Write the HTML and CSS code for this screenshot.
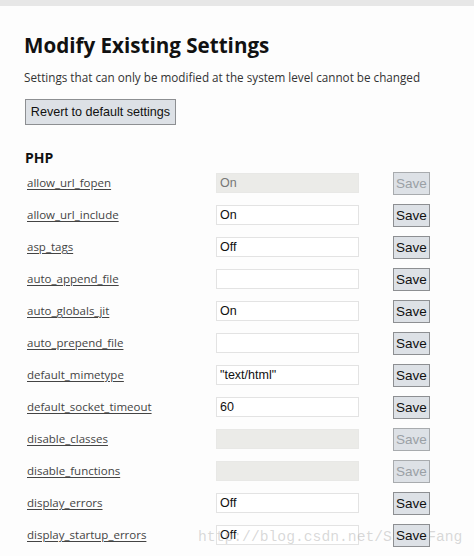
FILE: index.html
```html
<!DOCTYPE html>
<html>
<head>
<meta charset="utf-8">
<link rel="stylesheet" href="styles.css">
</head>
<body>
<div class="topbar"></div>
<main class="page">
  <h1 class="title">Modify Existing Settings</h1>
  <p class="note">Settings that can only be modified at the system level cannot be changed</p>
  <button class="btn revert">Revert to default settings</button>
  <h2 class="section">PHP</h2>
  <div class="rows">
    <div class="row"><a class="name" href="#">allow_url_fopen</a><input class="val" value="On" disabled><button class="btn save" disabled>Save</button></div>
    <div class="row"><a class="name" href="#">allow_url_include</a><input class="val" value="On"><button class="btn save">Save</button></div>
    <div class="row"><a class="name" href="#">asp_tags</a><input class="val" value="Off"><button class="btn save">Save</button></div>
    <div class="row"><a class="name" href="#">auto_append_file</a><input class="val" value=""><button class="btn save">Save</button></div>
    <div class="row"><a class="name" href="#">auto_globals_jit</a><input class="val" value="On"><button class="btn save">Save</button></div>
    <div class="row"><a class="name" href="#">auto_prepend_file</a><input class="val" value=""><button class="btn save">Save</button></div>
    <div class="row"><a class="name" href="#">default_mimetype</a><input class="val" value="&quot;text/html&quot;"><button class="btn save">Save</button></div>
    <div class="row"><a class="name" href="#">default_socket_timeout</a><input class="val" value="60"><button class="btn save">Save</button></div>
    <div class="row"><a class="name" href="#">disable_classes</a><input class="val" value="" disabled><button class="btn save" disabled>Save</button></div>
    <div class="row"><a class="name" href="#">disable_functions</a><input class="val" value="" disabled><button class="btn save" disabled>Save</button></div>
    <div class="row"><a class="name" href="#">display_errors</a><input class="val" value="Off"><button class="btn save">Save</button></div>
    <div class="row"><a class="name" href="#">display_startup_errors</a><input class="val" value="Off"><button class="btn save">Save</button></div>
  </div>
</main>
<div class="watermark">http://blog.csdn.net/SheniFang</div>
</body>
</html>
```
FILE: styles.css
```css
html, body {
  margin: 0;
  padding: 0;
  background: #fdfdfd;
  overflow: hidden;
}
body {
  width: 474px;
  height: 556px;
  position: relative;
  font-family: "Open Sans", "Noto Sans", sans-serif;
  color: #222;
}
.topbar {
  height: 6px;
  background: #e7e7e7;
}
.page {
  padding: 0 0 0 24px;
}
.title {
  margin: 24px 0 0 0;
  font-size: 20.6px;
  line-height: 30px;
  font-weight: 700;
  color: #111;
}
.note {
  margin: 9px 0 0 0;
  font-size: 11.7px;
  line-height: 16px;
  color: #333;
}
.btn {
  font-family: "Liberation Sans", Arial, sans-serif;
  background: #dde1e6;
  border: 1px solid #8d8f92;
  color: #111;
  padding: 0;
  border-radius: 0;
}
.revert {
  display: block;
  margin: 14px 0 0 1px;
  width: 151px;
  height: 26px;
  font-size: 12.6px;
  white-space: nowrap;
}
.section {
  margin: 24px 0 0 1px;
  font-size: 14px;
  line-height: 18px;
  font-weight: 700;
  color: #111;
}
.rows {
  display: flex;
  flex-direction: column;
}
.row {
  display: grid;
  grid-template-columns: 155px 143px 37px;
  column-gap: 34px;
  align-items: center;
  height: 32px;
  padding-left: 3px;
}
.name {
  font-size: 11.5px;
  color: #444;
  text-decoration: underline;
  text-underline-offset: 2px;
  line-height: 16px;
  white-space: nowrap;
}
.val {
  box-sizing: border-box;
  width: 143px;
  height: 20px;
  margin: 0;
  padding: 0 3px;
  border: 1px solid #e3e3e3;
  background: #ffffff;
  font-family: "Liberation Sans", Arial, sans-serif;
  font-size: 12.5px;
  color: #111;
  outline: none;
}
.val:disabled {
  background: #ebebe8;
  border-color: #e8e8e6;
  color: #777;
}
.save {
  position: relative;
  z-index: 2;
  box-sizing: border-box;
  width: 37px;
  height: 23px;
  font-size: 13.5px;
}
.save:disabled {
  color: #9aa0a5;
  background: #dde1e6;
  border-color: #a8abae;
}
.watermark {
  position: absolute;
  z-index: 1;
  left: 198px;
  top: 527px;
  font-family: "Liberation Mono", "Courier New", monospace;
  font-size: 14.7px;
  line-height: 20px;
  color: rgba(170, 170, 170, 0.45);
  pointer-events: none;
}
```
